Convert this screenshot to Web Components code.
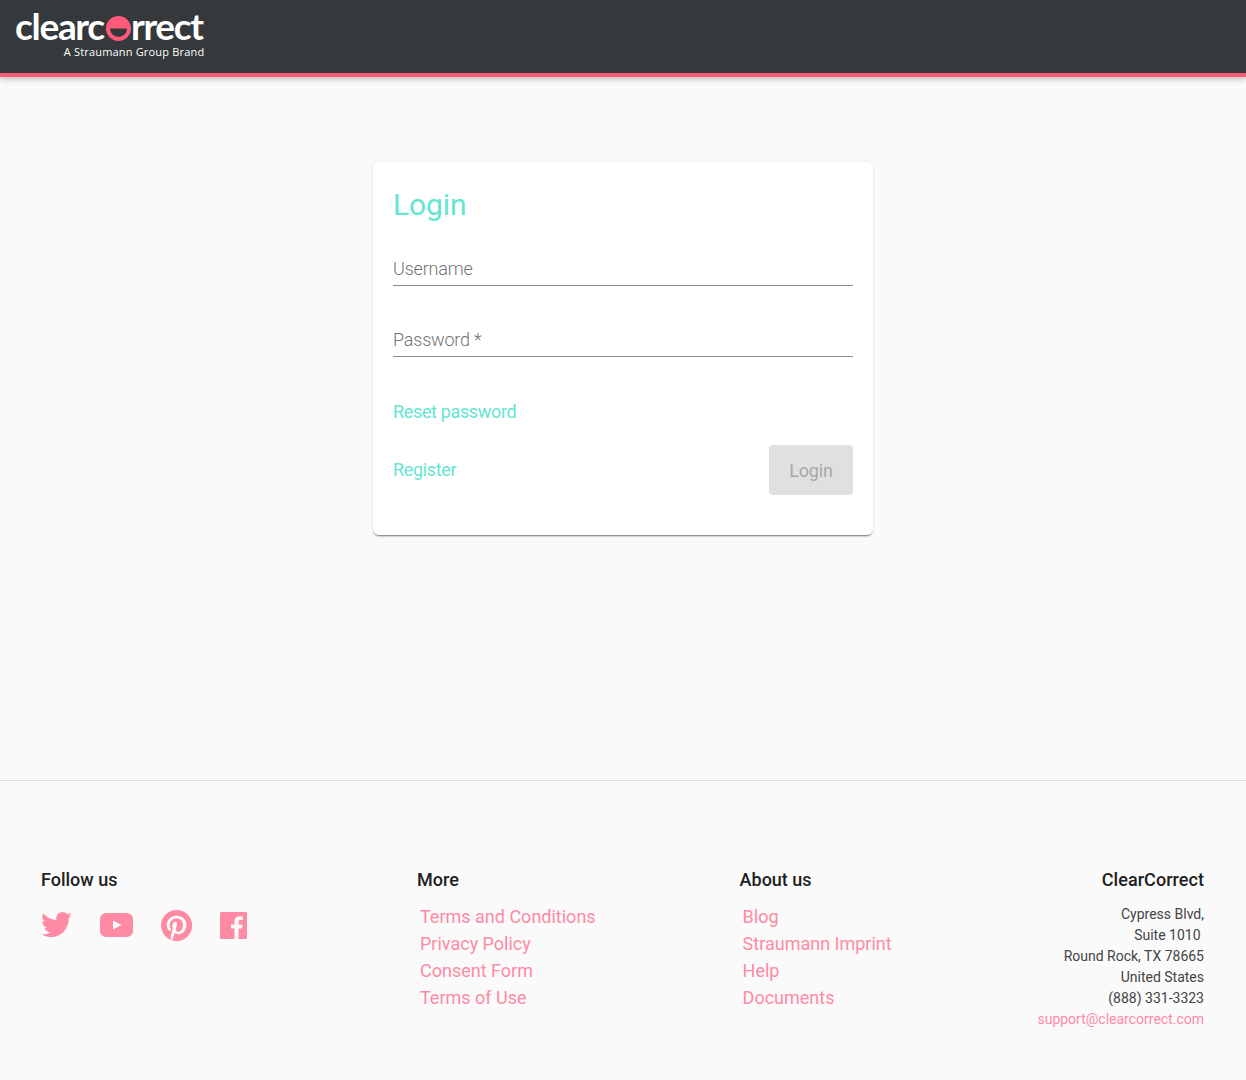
<!DOCTYPE html>
<html lang="en">
<head>
<meta charset="utf-8">
<title>ClearCorrect Login</title>
<style>
    html, body { margin: 0; padding: 0; background: #fafafa; }
    body { font-family: Roboto, "Liberation Sans", sans-serif; }
</style>
</head>
<body>
<cc-page>
    <cc-header slot="header"></cc-header>
    <cc-login slot="main"></cc-login>
    <cc-footer slot="footer"></cc-footer>
</cc-page>

<script>
class ccPage extends HTMLElement
{
    constructor()
    {
        super();
        this.shadowDOM = this.attachShadow({mode:"open"});
    }

    connectedCallback()
    {
        this.shadowDOM.innerHTML =
        `
        <style>
            :host
            {
                display         : flex;
                flex-direction  : column;
                height          : 1080px;
                overflow        : hidden;
            }
            .main
            {
                height          : 703px;
                padding-top     : 85px;
                box-sizing      : border-box;
                display         : flex;
                justify-content : center;
                align-items     : flex-start;
            }
        </style>
        <slot name="header"></slot>
        <div class="main"><slot name="main"></slot></div>
        <slot name="footer"></slot>
        `;
    }
}

class ccHeader extends HTMLElement
{
    constructor()
    {
        super();
        this.shadowDOM = this.attachShadow({mode:"open"});
    }

    connectedCallback()
    {
        this.shadowDOM.innerHTML =
        `
        <style>
            :host
            {
                display         : block;
                height          : 73px;
                background      : #35393b;
                border-bottom   : 4px solid #ff5a78;
                box-shadow      : 0 2px 6px rgba(0,0,0,.25);
                position        : relative;
                z-index         : 2;
            }
            .logo
            {
                display         : inline-flex;
                flex-direction  : column;
                align-items     : flex-end;
                padding         : 8px 0 0 15px;
                color           : #ffffff;
            }
            .word
            {
                display         : flex;
                align-items     : center;
                height          : 36px;
                font-family     : Lato, sans-serif;
                font-size       : 37px;
                font-weight     : 700;
                letter-spacing  : -1.3px;
                line-height     : 36px;
            }
            .word svg
            {
                width           : 25px;
                height          : 25px;
                margin          : 5px 0 0 2px;
                flex            : none;
            }
            .tag
            {
                font-family     : "Open Sans", sans-serif;
                font-size       : 11px;
                font-weight     : 400;
                line-height     : 16px;
                letter-spacing  : .18px;
                margin-right    : -1.5px;
            }
        </style>
        <div class="logo">
            <div class="word">
                <span>clearc</span>
                <svg viewBox="0 0 25 25">
                    <circle cx="12.5" cy="12.500" r="12.500" fill="#ff5a78"/>
                    <path d="M4 12.500h17a8.500 8.500 0 0 1-17 0z" fill="#35393b"/>
                </svg>
                <span>rrect</span>
            </div>
            <div class="tag">A Straumann Group Brand</div>
        </div>
        `;
    }
}

class ccField extends HTMLElement
{
    constructor()
    {
        super();
        this.shadowDOM = this.attachShadow({mode:"open"});
    }

    connectedCallback()
    {
        this.shadowDOM.innerHTML =
        `
        <style>
            :host
            {
                display         : block;
                height          : 33px;
                border-bottom   : 1px solid #8c8c8c;
            }
            .label
            {
                display         : block;
                padding-top     : 5px;
                font-size       : 18px;
                line-height     : 24px;
                font-weight     : 300;
                letter-spacing  : -.2px;
                color           : #747474;
            }
        </style>
        <span class="label"><slot></slot></span>
        `;
    }
}

class ccLogin extends HTMLElement
{
    constructor()
    {
        super();
        this.shadowDOM = this.attachShadow({mode:"open"});
    }

    connectedCallback()
    {
        this.shadowDOM.innerHTML =
        `
        <style>
            :host
            {
                display         : block;
                width           : 500px;
                height          : 373px;
                box-sizing      : border-box;
                padding         : 0 20px;
                background      : #ffffff;
                border-radius   : 6px;
                box-shadow      : 0 2px 2px -1px rgba(0,0,0,.55), 0 0 3px rgba(0,0,0,.07);
            }
            h1
            {
                margin          : 0;
                padding-top     : 24px;
                height          : 50px;
                color           : #63e6d0;
                font-size       : 30px;
                line-height     : 38px;
                font-weight     : 400;
                letter-spacing  : -.1px;
            }
            .fields
            {
                display         : flex;
                flex-direction  : column;
                gap             : 37px;
                margin-top      : 16px;
            }
            a
            {
                color           : #63e6d0;
                font-size       : 18px;
                line-height     : 24px;
                font-weight     : 400;
                letter-spacing  : -.35px;
                text-decoration : none;
            }
            .reset
            {
                display         : block;
                margin-top      : 43px;
            }
            .actions
            {
                display         : flex;
                justify-content : space-between;
                align-items     : center;
                margin-top      : 21px;
            }
            .btn
            {
                width           : 84px;
                height          : 50px;
                display         : flex;
                align-items     : center;
                justify-content : center;
                box-sizing      : border-box;
                background      : #e0e0e0;
                color           : #a8a8a8;
                font-size       : 18px;
                letter-spacing  : -.15px;
                border-radius   : 4px;
            }
        </style>
        <h1>Login</h1>
        <div class="fields">
            <cc-field>Username</cc-field>
            <cc-field>Password *</cc-field>
        </div>
        <a class="reset" href="#">Reset password</a>
        <div class="actions">
            <a href="#">Register</a>
            <div class="btn">Login</div>
        </div>
        `;
    }
}

class ccFooter extends HTMLElement
{
    constructor()
    {
        super();
        this.shadowDOM = this.attachShadow({mode:"open"});
    }

    connectedCallback()
    {
        this.shadowDOM.innerHTML =
        `
        <style>
            :host
            {
                display         : grid;
                grid-template-columns : 376px 322.6px 1fr auto;
                height          : 299px;
                box-sizing      : border-box;
                padding         : 88px 42px 0 41px;
                border-top      : 1px solid #dcdcdc;
                color           : #212121;
            }
            h3
            {
                margin          : 0;
                font-size       : 18px;
                line-height     : 22px;
                font-weight     : 500;
                color           : #212121;
            }
            ul
            {
                list-style      : none;
                margin          : 12px 0 0;
                padding         : 0 0 0 3px;
            }
            li
            {
                font-size       : 18px;
                line-height     : 27px;
            }
            a
            {
                color           : #ff8aa3;
                text-decoration : none;
            }
            .social
            {
                display         : flex;
                align-items     : center;
                margin-top      : 18px;
                height          : 32px;
            }
            .social svg { display: block; fill: #ff8aa3; flex: none; }
            .address
            {
                text-align      : right;
                font-size       : 14px;
                line-height     : 21px;
                color           : #444444;
                margin-top      : 13px;
            }
            .contact h3 { text-align: right; letter-spacing: .05px; }
        </style>
        <section>
            <h3>Follow us</h3>
            <div class="social">
                <svg style="width:31px;height:27px" viewBox="0 0 24 20.5" preserveAspectRatio="none">
                    <path d="M24 2.4c-.9.4-1.800.7-2.800.8 1-.6 1.800-1.600 2.200-2.700-1 .6-2 1-3.100 1.200A4.900 4.900 0 0 0 16.700 0c-2.700 0-4.900 2.200-4.900 4.900 0 .4 0 .8.100 1.100C7.800 5.800 4.200 3.900 1.700.9c-.4.700-.7 1.600-.7 2.500 0 1.700.9 3.200 2.200 4.100-.8 0-1.600-.2-2.200-.6v.1c0 2.400 1.700 4.400 3.900 4.800-.4.100-.8.200-1.300.2-.3 0-.6 0-.9-.1.600 2 2.400 3.400 4.600 3.400A9.900 9.900 0 0 1 0 16.900a13.900 13.900 0 0 0 7.500 2.200c9.100 0 14-7.500 14-14v-.6c1-.7 1.800-1.600 2.500-2.100z"/>
                </svg>
                <svg style="width:33px;height:24px;margin-left:28px" viewBox="0 0 33 24">
                    <path fill-rule="evenodd" d="M6 0h21a6 6 0 0 1 6 6v12a6 6 0 0 1-6 6H6a6 6 0 0 1-6-6V6a6 6 0 0 1 6-6zM13 7.500v9l8.500-4.500z"/>
                </svg>
                <svg style="width:31px;height:31px;margin-left:28px;margin-right:1px" viewBox="0 0 32 32">
                    <path d="M16 0a16 16 0 0 0-5.800 30.900c-.1-1.300-.3-3.200.1-4.600l1.900-8s-.5-1-.5-2.400c0-2.200 1.300-3.900 2.900-3.900 1.400 0 2 1 2 2.300 0 1.400-.9 3.400-1.300 5.300-.4 1.600.8 2.900 2.400 2.900 2.800 0 5-3 5-7.300 0-3.800-2.700-6.500-6.600-6.500-4.500 0-7.200 3.400-7.200 6.900 0 1.400.5 2.800 1.200 3.600.1.200.1.300.1.500l-.5 1.900c-.1.300-.2.400-.6.200-2-.9-3.200-3.800-3.200-6.200 0-5 3.700-9.700 10.500-9.700 5.500 0 9.800 3.900 9.800 9.200 0 5.500-3.500 9.900-8.300 9.900-1.600 0-3.100-.8-3.700-1.800l-1 3.800c-.4 1.400-1.300 3.100-2 4.200A16 16 0 1 0 16 0z"/>
                </svg>
                <svg style="width:27px;height:27px;margin-left:27px" viewBox="0 0 27 27">
                    <path d="M1.500 0h24A1.500 1.500 0 0 1 27 1.500v24a1.500 1.500 0 0 1-1.500 1.500H18.600V16.600h3.500l.5-4h-4v-2.600c0-1.200.3-2 2-2h2.200V4.400c-.4 0-1.700-.2-3.100-.2-3.100 0-5.200 1.900-5.200 5.300v3.100h-3.500v4h3.500V27H1.500A1.500 1.500 0 0 1 0 25.500v-24A1.500 1.500 0 0 1 1.500 0z"/>
                </svg>
            </div>
        </section>
        <section>
            <h3>More</h3>
            <ul>
                <li><a href="#">Terms and Conditions</a></li>
                <li><a href="#">Privacy Policy</a></li>
                <li><a href="#">Consent Form</a></li>
                <li><a href="#">Terms of Use</a></li>
            </ul>
        </section>
        <section>
            <h3>About us</h3>
            <ul>
                <li><a href="#">Blog</a></li>
                <li><a href="#">Straumann Imprint</a></li>
                <li><a href="#">Help</a></li>
                <li><a href="#">Documents</a></li>
            </ul>
        </section>
        <section class="contact">
            <h3>ClearCorrect</h3>
            <div class="address">
                Cypress Blvd,<br>
                Suite 1010&nbsp;<br>
                Round Rock, TX 78665<br>
                United States<br>
                (888) 331-3323<br>
                <a href="#">support@clearcorrect.com</a>
            </div>
        </section>
        `;
    }
}

customElements.define('cc-page',ccPage);
customElements.define('cc-header',ccHeader);
customElements.define('cc-field',ccField);
customElements.define('cc-login',ccLogin);
customElements.define('cc-footer',ccFooter);
</script>
</body>
</html>
